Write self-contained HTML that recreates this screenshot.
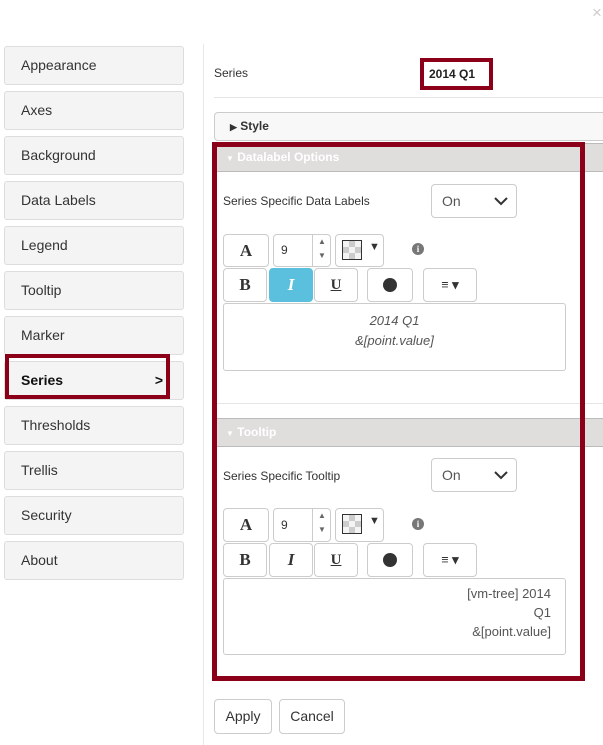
<!DOCTYPE html>
<html><head><style>
*{box-sizing:border-box;margin:0;padding:0}
body{width:603px;height:745px;background:#fff;font-family:"Liberation Sans",Arial,sans-serif;font-size:13px;color:#333;position:relative;overflow:hidden}
.a{position:absolute}
.nav{position:absolute;left:4px;width:180px;height:39px;background:#f4f4f4;border:1px solid #ddd;border-radius:3px;padding-left:16px;line-height:36px;font-size:14px;color:#333}
.btn{position:absolute;background:#fff;border:1px solid #ccc;border-radius:4px;text-align:center;font-family:"Liberation Serif",serif;font-weight:bold;font-size:17px;color:#333}
.hdr{position:absolute;left:214px;width:389px;height:29px;background:#e0dddd;border-top:1px solid #bbb;border-bottom:1px solid #bbb;color:#fff;font-weight:bold;font-size:12px;line-height:27px;padding-left:12px}
.sel{position:absolute;left:431px;width:86px;height:34px;border:1px solid #ccc;border-radius:4px;padding-left:10px;line-height:32px;font-size:14px;color:#555}
.sel svg{position:absolute;right:8px;top:12px}
.ta{position:absolute;left:223px;width:343px;border:1px solid #ccc;border-radius:3px;font-size:13px;color:#555}
.lbl{position:absolute;left:223px;font-size:12px;color:#333}
.chk{width:20px;height:20px;border:1px solid #333;background:repeating-conic-gradient(#ccc 0 25%,#f4f4f4 0 50%) 0 0/12px 12px}
</style></head><body>
<div class="a" style="left:592px;top:3px;color:#ccc;font-size:17px">×</div>
<div class="nav" style="top:46px">Appearance</div>
<div class="nav" style="top:91px">Axes</div>
<div class="nav" style="top:136px">Background</div>
<div class="nav" style="top:181px">Data Labels</div>
<div class="nav" style="top:226px">Legend</div>
<div class="nav" style="top:271px">Tooltip</div>
<div class="nav" style="top:316px">Marker</div>
<div class="nav" style="top:361px;font-weight:bold;color:#111">Series<span style="position:absolute;right:20px">&gt;</span></div>
<div class="a" style="left:5px;top:354px;width:165px;height:45px;border:4px solid #8b0018"></div>
<div class="nav" style="top:406px">Thresholds</div>
<div class="nav" style="top:451px">Trellis</div>
<div class="nav" style="top:496px">Security</div>
<div class="nav" style="top:541px">About</div>
<div class="a" style="left:203px;top:44px;width:1px;height:701px;background:#e8e8e8"></div>
<div class="a" style="left:214px;top:66px;font-size:12px">Series</div>
<div class="a" style="left:420px;top:58px;width:73px;height:32px;border:4px solid #8b0018;font-weight:bold;font-size:12px;line-height:24px;padding-left:5px;color:#222">2014 Q1</div>
<div class="a" style="left:214px;top:97px;width:389px;height:1px;background:#e5e5e5"></div>
<div class="a" style="left:214px;top:112px;width:395px;height:29px;border:1px solid #ccc;border-radius:4px;background:#f8f8f8;font-weight:bold;font-size:12px;line-height:27px;padding-left:15px;color:#333"><span style="font-size:9px">▶</span> Style</div>
<div class="hdr" style="top:143px"><span style="font-size:8px">▼</span> Datalabel Options</div>
<div class="lbl" style="top:194px">Series Specific Data Labels</div>
<div class="sel" style="top:184px">On<svg width="14" height="9" viewBox="0 0 14 9"><path d="M1 1L7 7L13 1" fill="none" stroke="#333" stroke-width="2"/></svg></div>
<div class="btn" style="left:223px;top:234px;width:46px;height:33px;line-height:31px">A</div>
<div class="btn" style="left:273px;top:234px;width:58px;height:33px;font-family:'Liberation Sans';font-weight:normal;font-size:12px;text-align:left;padding-left:7px;line-height:31px">9<span style="position:absolute;left:38px;top:0;width:19px;height:31px;border-left:1px solid #ccc;font-size:8px;color:#666;line-height:14px;text-align:center">▲<br>▼</span></div>
<div class="btn" style="left:335px;top:234px;width:49px;height:33px;text-align:left;padding:5px 0 0 6px"><div class="chk"></div><span style="position:absolute;left:33px;top:6px;font-size:11px">▼</span></div>
<div class="a" style="left:412px;top:243px;width:12px;height:12px;border-radius:50%;background:#777;color:#fff;font-size:9px;font-weight:bold;text-align:center;line-height:12px;font-family:'Liberation Serif'">i</div>
<div class="btn" style="left:223px;top:268px;width:44px;height:34px;line-height:32px">B</div>
<div class="btn" style="left:269px;top:268px;width:44px;height:34px;line-height:32px;background:#5bc0de;border-color:#5bc0de;color:#fff;font-style:italic">I</div>
<div class="btn" style="left:314px;top:268px;width:44px;height:34px;line-height:32px;text-decoration:underline;font-size:15px">U</div>
<div class="btn" style="left:367px;top:268px;width:46px;height:34px"><div style="width:14px;height:14px;border-radius:50%;background:#333;margin:9px auto"></div></div>
<div class="btn" style="left:423px;top:268px;width:54px;height:34px;font-size:13px;line-height:32px">≡ ▾</div>
<div class="ta" style="top:303px;height:68px;text-align:center;font-style:italic;padding-top:7px;line-height:20px">2014 Q1<br>&amp;[point.value]</div>
<div class="a" style="left:214px;top:403px;width:389px;height:1px;background:#e5e5e5"></div>
<div class="hdr" style="top:418px"><span style="font-size:8px">▼</span> Tooltip</div>
<div class="lbl" style="top:469px">Series Specific Tooltip</div>
<div class="sel" style="top:458px">On<svg width="14" height="9" viewBox="0 0 14 9"><path d="M1 1L7 7L13 1" fill="none" stroke="#333" stroke-width="2"/></svg></div>
<div class="btn" style="left:223px;top:508px;width:46px;height:34px;line-height:32px">A</div>
<div class="btn" style="left:273px;top:508px;width:58px;height:34px;font-family:'Liberation Sans';font-weight:normal;font-size:12px;text-align:left;padding-left:7px;line-height:32px">9<span style="position:absolute;left:38px;top:0;width:19px;height:32px;border-left:1px solid #ccc;font-size:8px;color:#666;line-height:14px;text-align:center">▲<br>▼</span></div>
<div class="btn" style="left:335px;top:508px;width:49px;height:34px;text-align:left;padding:5px 0 0 6px"><div class="chk"></div><span style="position:absolute;left:33px;top:6px;font-size:11px">▼</span></div>
<div class="a" style="left:412px;top:518px;width:12px;height:12px;border-radius:50%;background:#777;color:#fff;font-size:9px;font-weight:bold;text-align:center;line-height:12px;font-family:'Liberation Serif'">i</div>
<div class="btn" style="left:223px;top:543px;width:44px;height:34px;line-height:32px">B</div>
<div class="btn" style="left:269px;top:543px;width:44px;height:34px;line-height:32px;font-style:italic">I</div>
<div class="btn" style="left:314px;top:543px;width:44px;height:34px;line-height:32px;text-decoration:underline;font-size:15px">U</div>
<div class="btn" style="left:367px;top:543px;width:46px;height:34px"><div style="width:14px;height:14px;border-radius:50%;background:#333;margin:9px auto"></div></div>
<div class="btn" style="left:423px;top:543px;width:54px;height:34px;font-size:13px;line-height:32px">≡ ▾</div>
<div class="ta" style="top:578px;height:77px;text-align:right;padding:5px 14px 0 0;line-height:19px">[vm-tree] 2014<br>Q1<br>&amp;[point.value]</div>
<div class="a" style="left:212px;top:142px;width:373px;height:539px;border:5px solid #8b0018"></div>
<div class="a" style="left:214px;top:699px;width:58px;height:35px;border:1px solid #ccc;border-radius:4px;line-height:33px;text-align:center;font-size:14px">Apply</div>
<div class="a" style="left:279px;top:699px;width:66px;height:35px;border:1px solid #ccc;border-radius:4px;line-height:33px;text-align:center;font-size:14px">Cancel</div>
</body></html>
